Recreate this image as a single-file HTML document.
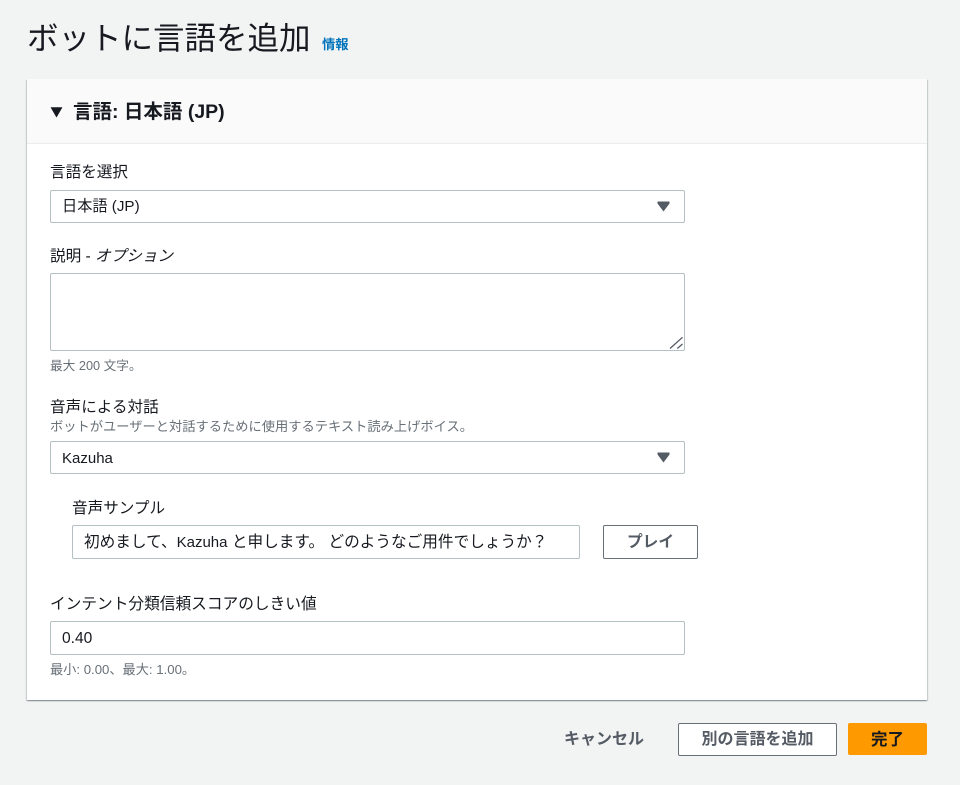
<!DOCTYPE html>
<html lang="ja"><head><meta charset="utf-8">
<style>
html,body{margin:0;padding:0}
body{width:960px;height:785px;overflow:hidden;background:#f2f3f3;position:relative;font-family:"Liberation Sans","Noto Sans CJK JP",sans-serif;color:#16191f}
.t{position:absolute;white-space:nowrap;line-height:20px}
.box{position:absolute;box-sizing:border-box;background:#fff;border:1px solid #b4c0c1;border-radius:2px}
.card{position:absolute;left:27px;top:79px;width:900px;height:621px;background:#fff;box-shadow:0 1px 1px 0 rgba(0,28,36,.3),1px 1px 1px 0 rgba(0,28,36,.15),-1px 1px 1px 0 rgba(0,28,36,.15)}
.hd{position:absolute;left:0;top:0;width:900px;height:65px;background:#fafafa;border-bottom:1px solid #eaeded;box-sizing:border-box}
.lb{font-size:15.6px;color:#16191f}
.hint{font-size:12.7px;color:#687078}
.v{font-size:15.2px;color:#16191f}
.btn{position:absolute;box-sizing:border-box;background:#fff;border:1px solid #687078;border-radius:2px;font-weight:700;color:#545b64;font-size:15.7px;text-align:center}
</style></head><body>
<div class="t" style="left:27px;top:21px;font-size:31.5px;line-height:34px">ボットに言語を追加</div>
<div class="t" style="left:322px;top:35px;font-size:13.3px;font-weight:700;color:#0073bb">情報</div>
<div class="card"><div class="hd"></div></div>
<svg style="position:absolute;left:50px;top:106px" width="13" height="12"><path d="M1 1.5H12L6.5 11Z" fill="#16191f" stroke="#16191f" stroke-width=".6" stroke-linejoin="round"/></svg>
<div class="t" style="left:73px;top:102px;font-size:19.5px;font-weight:700">言語: 日本語 (JP)</div>

<div class="t lb" style="left:50px;top:163px">言語を選択</div>
<div class="box" style="left:50px;top:190px;width:635px;height:33px"></div>
<div class="t v" style="left:62px;top:197px">日本語 (JP)</div>
<svg style="position:absolute;left:657px;top:201px" width="13" height="11"><path d="M0.5 0.5H12.5V2.5L6.5 10.5L0.5 2.5Z" fill="#545b64"/></svg>

<div class="t lb" style="left:50px;top:247px">説明 - <i>オプション</i></div>
<div class="box" style="left:50px;top:273px;width:635px;height:78px"></div>
<svg style="position:absolute;left:668px;top:335px" width="16" height="15"><path d="M2 13.5L14.5 2.3M9.3 13.5L14.5 9" stroke="#545b64" stroke-width="1.3" fill="none"/></svg>
<div class="t hint" style="left:50px;top:356px">最大 200 文字。</div>

<div class="t lb" style="left:50px;top:398px">音声による対話</div>
<div class="t" style="left:50px;top:417px;font-size:13.25px;color:#687078">ボットがユーザーと対話するために使用するテキスト読み上げボイス。</div>
<div class="box" style="left:50px;top:441px;width:635px;height:33px"></div>
<div class="t v" style="left:62px;top:449px;font-size:15px">Kazuha</div>
<svg style="position:absolute;left:657px;top:452px" width="13" height="11"><path d="M0.5 0.5H12.5V2.5L6.5 10.5L0.5 2.5Z" fill="#545b64"/></svg>

<div class="t lb" style="left:72px;top:499px">音声サンプル</div>
<div class="box" style="left:72px;top:525px;width:508px;height:34px"></div>
<div class="t v" style="left:84px;top:533px;font-size:15.65px">初めまして、<span style="font-size:15px">Kazuha</span> と申します。 どのようなご用件でしょうか？</div>
<div class="btn" style="left:603px;top:525px;width:95px;height:34px;line-height:33px">プレイ</div>

<div class="t lb" style="left:50px;top:595px;font-size:15.7px">インテント分類信頼スコアのしきい値</div>
<div class="box" style="left:50px;top:621px;width:635px;height:34px"></div>
<div class="t v" style="left:62px;top:629px;font-size:15.6px">0.40</div>
<div class="t hint" style="left:50px;top:660px;font-size:13.2px">最小: 0.00、最大: 1.00。</div>

<div class="t" style="left:564px;top:730px;font-size:16px;font-weight:700;color:#545b64">キャンセル</div>
<div class="btn" style="left:678px;top:723px;width:159px;height:33px;line-height:32px;font-size:16px">別の言語を追加</div>
<div class="btn" style="left:848px;top:723px;width:79px;height:32px;line-height:32px;background:#ff9900;border-color:#ff9900;color:#16191f;font-size:16.5px">完了</div>
</body></html>
